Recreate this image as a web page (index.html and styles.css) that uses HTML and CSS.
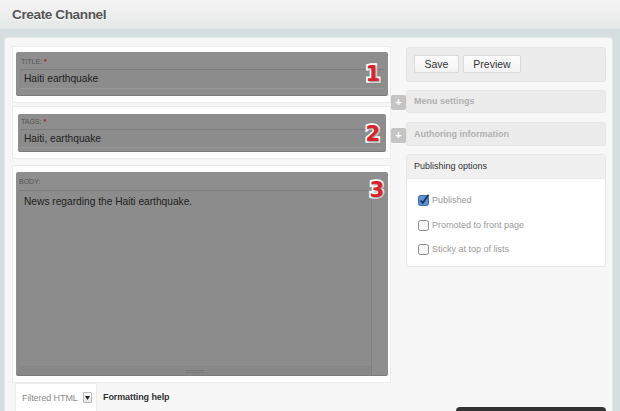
FILE: index.html
```html
<!DOCTYPE html>
<html>
<head>
<meta charset="utf-8">
<link rel="stylesheet" href="styles.css">
</head>
<body>
<div class="header"><h1 class="title">Create Channel</h1></div>
<div class="card">
  <div class="left">
    <div class="wrap wrap-title">
      <div class="field field-title">
        <div class="label">TITLE: <span class="req">*</span></div>
        <div class="input">Haiti earthquake</div>
        <span class="num num1">1</span>
      </div>
    </div>
    <div class="wrap wrap-tags">
      <div class="field field-tags">
        <div class="label">TAGS: <span class="req">*</span></div>
        <div class="input input-tags">Haiti, earthquake</div>
        <span class="num num2">2</span>
      </div>
    </div>
    <div class="wrap wrap-body">
      <div class="field field-body">
        <div class="label">BODY:</div>
        <div class="textarea">
          <div class="ta-text">News regarding the Haiti earthquake.</div>
          <div class="grippie"><span class="grip"></span></div>
        </div>
        <span class="num num3">3</span>
      </div>
    </div>
    <div class="format-row">
      <div class="select-box">
        <span class="select-text">Filtered HTML</span>
        <span class="select-btn"><svg width="5" height="4" viewBox="0 0 5 4"><path d="M0 0h5L2.5 4z" fill="#222"/></svg></span>
      </div>
      <span class="format-help">Formatting help</span>
    </div>
  </div>
  <div class="right">
    <div class="actions">
      <button class="btn btn-save">Save</button>
      <button class="btn btn-preview">Preview</button>
    </div>
    <div class="collapsed-row">
      <span class="plus">+</span>
      <div class="bar">Menu settings</div>
    </div>
    <div class="collapsed-row row-author">
      <span class="plus">+</span>
      <div class="bar bar-author">Authoring information</div>
    </div>
    <div class="pubbox">
      <div class="pub-head">Publishing options</div>
      <div class="pub-body">
        <div class="opt">
          <svg class="cb" width="12" height="12" viewBox="0 0 12 12"><rect x="0.5" y="1.5" width="10" height="10" rx="2" fill="#5b8fd6" stroke="#3d6aa8"/><path d="M2.5 6.5l2.3 2.5L10.5 0.8" fill="none" stroke="#1b2f57" stroke-width="1.7"/></svg>
          <span class="opt-label">Published</span>
        </div>
        <div class="opt">
          <svg class="cb" width="12" height="12" viewBox="0 0 12 12"><rect x="0.5" y="1.5" width="10" height="10" rx="2" fill="#f6f6f6" stroke="#8a8a8a"/></svg>
          <span class="opt-label">Promoted to front page</span>
        </div>
        <div class="opt">
          <svg class="cb" width="12" height="12" viewBox="0 0 12 12"><rect x="0.5" y="1.5" width="10" height="10" rx="2" fill="#f6f6f6" stroke="#8a8a8a"/></svg>
          <span class="opt-label">Sticky at top of lists</span>
        </div>
      </div>
    </div>
  </div>
</div>
<div class="dark-peek"></div>
</body>
</html>
```
FILE: styles.css
```css
html, body {
  margin: 0;
  padding: 0;
}
body {
  width: 620px;
  height: 411px;
  overflow: hidden;
  background: #d5dfdf;
  font-family: "Liberation Sans", Arial, Helvetica, sans-serif;
  position: relative;
}
.header {
  height: 30px;
  background: linear-gradient(#f5f5f5, #e5e6e6);
  border-bottom: 1px solid #d3dcdc;
  box-sizing: border-box;
  padding-left: 12px;
}
.title {
  margin: 0;
  font-size: 13.6px;
  line-height: 30px;
  font-weight: bold;
  color: #555;
  letter-spacing: -0.4px;
  text-shadow: 0 1px 0 #fff;
}
.card {
  margin: 7px 7px 0 4px;
  height: 374px;
  box-sizing: border-box;
  background: #f7f7f7;
  border: 1px solid #e6e9e9;
  border-bottom: none;
  border-radius: 4px 4px 0 0;
  display: flex;
}
.left {
  width: 379px;
  padding: 8px 0 0 7px;
  display: flex;
  flex-direction: column;
}
.wrap {
  background: #fff;
  border: 1px solid #ececec;
  box-sizing: border-box;
}
.wrap-title {
  height: 57px;
  padding: 5px 2px 7px 3px;
}
.wrap-tags {
  margin-top: 3px;
  height: 53px;
  padding: 7px 4px 7px 5px;
}
.wrap-body {
  margin-top: 6px;
  height: 218px;
  padding: 6px 2px 7px 3px;
}
.field {
  position: relative;
  background: #8e8e8e;
  border-radius: 2px;
  box-sizing: border-box;
  height: 100%;
  box-shadow: 0 1px 0 #7a7a7a;
}
.field-title {
  padding: 5px 4px 0 4px;
}
.field-tags {
  padding: 4px 4px 0 2px;
}
.field-body {
  padding: 5px 16px 0 2px;
  display: flex;
  flex-direction: column;
}
.label {
  font-size: 7px;
  line-height: 9px;
  height: 9px;
  color: #555;
  padding-left: 1px;
}
.field-tags .label {
  height: 8px;
  line-height: 8px;
}
.req {
  color: #b01818;
  font-weight: bold;
}
.input {
  margin-top: 3px;
  height: 20px;
  box-sizing: border-box;
  border-top: 1px solid #7d7d7d;
  border-bottom: 1px solid #9a9a9a;
  border-left: 1px solid #868686;
  background: #8c8c8c;
  font-size: 10.2px;
  line-height: 18px;
  color: #222;
  padding-left: 3px;
}
.input-tags {
  height: 19px;
  line-height: 17px;
}
.textarea {
  margin-top: 4px;
  flex: 1;
  border-top: 1px solid #7d7d7d;
  border-left: 1px solid #868686;
  border-right: 1px solid #7f7f7f;
  background: #8c8c8c;
  display: flex;
  flex-direction: column;
}
.ta-text {
  flex: 1;
  font-size: 10.2px;
  line-height: 14px;
  color: #222;
  padding: 4px 0 0 5px;
}
.grippie {
  height: 8px;
  background: #888;
  border-top: 1px solid #858585;
  display: flex;
  justify-content: center;
  align-items: center;
}
.grip {
  width: 18px;
  height: 3px;
  border-top: 1px solid #777;
  border-bottom: 1px solid #777;
  box-sizing: border-box;
}
.num {
  position: absolute;
  font-family: "DejaVu Sans", sans-serif;
  font-weight: bold;
  font-size: 21px;
  line-height: 22px;
  color: #d8232c;
  -webkit-text-stroke: 3.5px #fff;
  paint-order: stroke fill;
  text-shadow: 1px 1px 2px rgba(0,0,0,0.45);
}
.num1 { right: 8px; top: 11px; }
.num2 { right: 6px; top: 9px; }
.num3 { right: 4px; top: 7px; }
.format-row {
  display: flex;
  align-items: center;
  height: 28px;
}
.select-box {
  margin-left: 3px;
  width: 82px;
  height: 28px;
  box-sizing: border-box;
  background: #fff;
  border: 1px solid #ececec;
  border-bottom: none;
  display: flex;
  align-items: center;
  padding-left: 6px;
}
.select-text {
  font-size: 9px;
  color: #8c8c8c;
  letter-spacing: -0.1px;
}
.select-btn {
  margin-left: 5px;
  width: 9px;
  height: 11px;
  box-sizing: border-box;
  border: 1px solid #bbb;
  border-radius: 1px;
  background: linear-gradient(#fff, #e6e6e6);
  display: flex;
  align-items: center;
  justify-content: center;
}
.format-help {
  margin-left: 6px;
  font-size: 9px;
  font-weight: bold;
  color: #333;
  letter-spacing: -0.1px;
}
.right {
  width: 215px;
  padding: 9px 0 0 0;
  display: flex;
  flex-direction: column;
}
.actions {
  margin-left: 15px;
  height: 35px;
  box-sizing: border-box;
  background: #ececec;
  border: 1px solid #e4e4e4;
  border-radius: 3px;
  display: flex;
  align-items: flex-start;
  gap: 4px;
  padding: 7px 0 0 7px;
}
.btn {
  height: 18px;
  padding: 0;
  box-sizing: border-box;
  border: 1px solid #dadada;
  border-radius: 2px;
  background: linear-gradient(#fdfdfd, #f3f3f3);
  font-family: "Liberation Sans", Arial, sans-serif;
  font-size: 10.5px;
  color: #333;
}
.btn-save { width: 45px; }
.btn-preview { width: 58px; }
.collapsed-row {
  margin-top: 8px;
  display: flex;
  align-items: center;
}
.row-author {
  margin-top: 9px;
}
.plus {
  width: 15px;
  height: 15px;
  background: #c4c4c4;
  border-radius: 2px;
  color: #fff;
  font-size: 11px;
  font-weight: bold;
  line-height: 15px;
  text-align: center;
  margin-top: 2px;
}
.bar {
  flex: 1;
  height: 23px;
  box-sizing: border-box;
  background: #ececec;
  border: 1px solid #e6e6e6;
  border-radius: 3px;
  font-size: 9px;
  font-weight: bold;
  color: #b0b0b0;
  line-height: 21px;
  padding-left: 7px;
}
.bar-author {
  height: 24px;
  line-height: 22px;
}
.pubbox {
  margin: 8px 0 0 15px;
  height: 113px;
  box-sizing: border-box;
  border: 1px solid #e6e6e6;
  border-radius: 3px;
  background: #fff;
  overflow: hidden;
}
.pub-head {
  height: 24px;
  background: #f0f0f0;
  border-bottom: 1px solid #ebebeb;
  box-sizing: border-box;
  font-size: 9px;
  color: #333;
  line-height: 23px;
  padding-left: 7px;
}
.pub-body {
  padding: 15px 0 0 11px;
  display: flex;
  flex-direction: column;
  gap: 12.5px;
}
.opt {
  display: flex;
  align-items: center;
  height: 12px;
}
.cb {
  display: block;
}
.opt-label {
  margin-left: 2px;
  font-size: 9px;
  color: #9a9a9a;
}
.dark-peek {
  position: absolute;
  left: 456px;
  top: 407px;
  width: 150px;
  height: 10px;
  background: #333;
  border-radius: 4px 4px 0 0;
}
```
